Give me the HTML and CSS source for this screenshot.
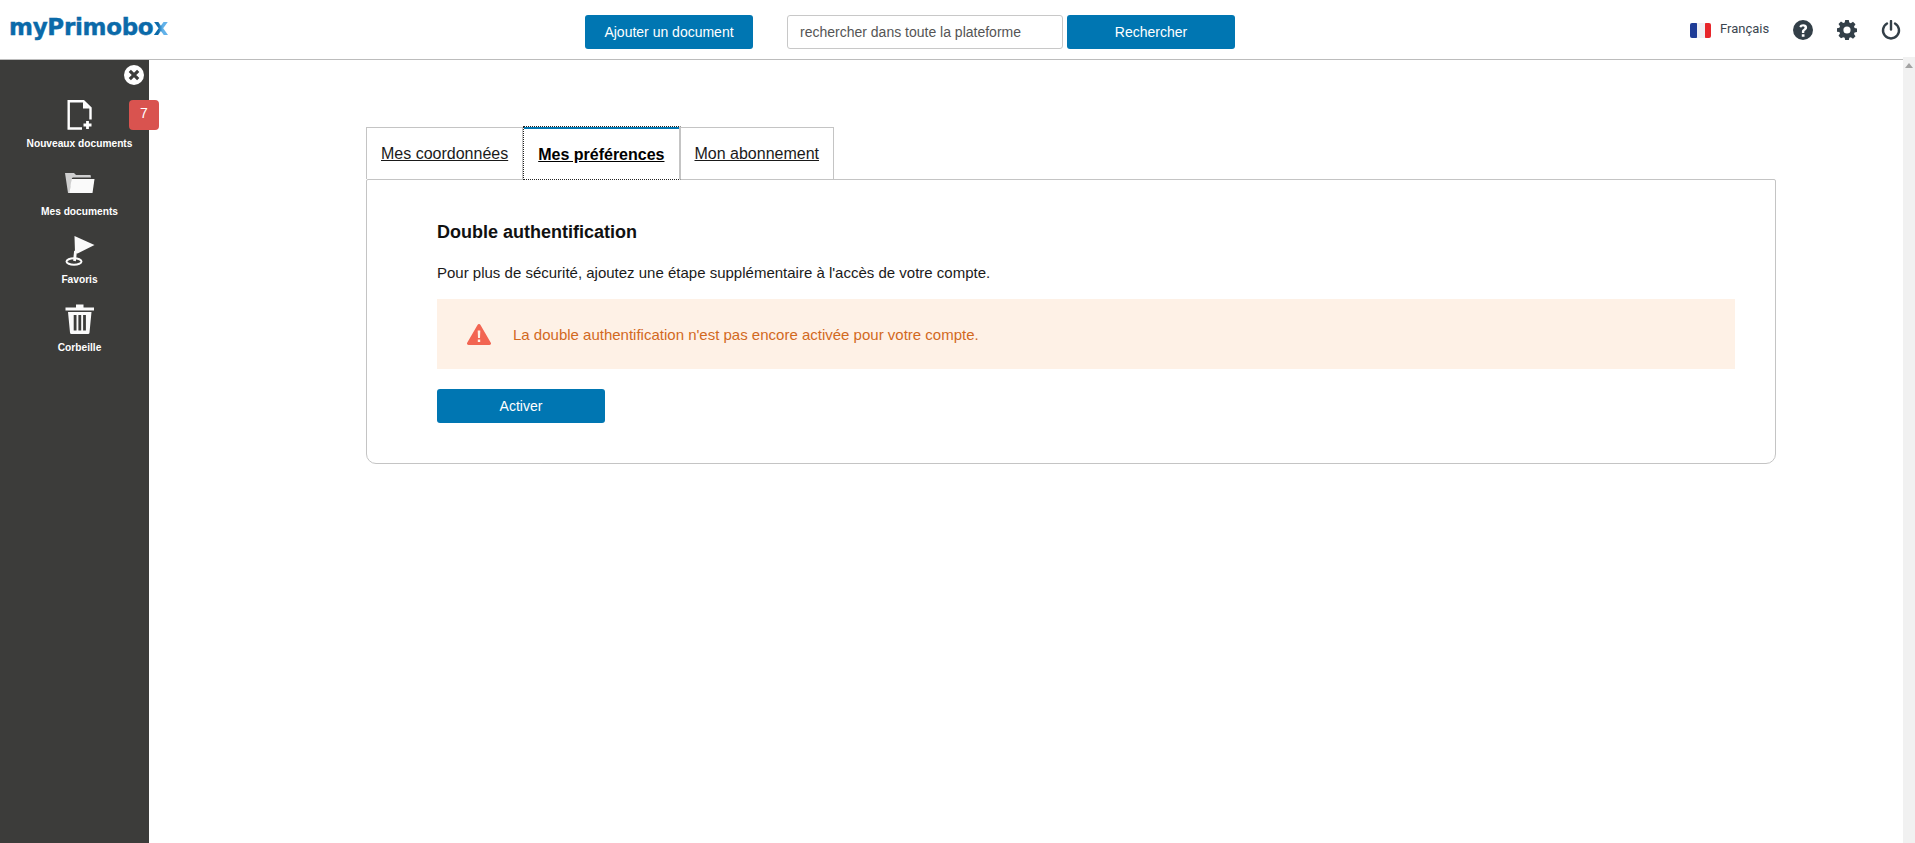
FILE: index.html
```html
<!DOCTYPE html>
<html lang="fr">
<head>
<meta charset="utf-8">
<title>myPrimobox - Mes préférences</title>
<link rel="stylesheet" href="styles.css">
</head>
<body>

<header class="topbar">
  <a class="logo" href="#">myPrimobo<span class="logoX">x</span></a>

  <div class="topActions">
    <button class="btn btnAdd" type="button">Ajouter un document</button>
    <input class="searchInput" type="text" value="rechercher dans toute la plateforme">
    <button class="btn btnSearch" type="button">Rechercher</button>
  </div>

  <div class="topRight">
    <svg class="flag" viewBox="0 0 21 15" aria-hidden="true">
      <rect x="0" y="0" width="8" height="15" rx="2" fill="#1f3c96"/>
      <rect x="14" y="0" width="7" height="15" rx="2" fill="#e7262b"/>
      <rect x="7" y="0" width="8" height="15" fill="#f0f0f4"/>
    </svg>
    <span class="lang">Français</span>
    <svg class="topIcon helpIcon" viewBox="0 0 20 20" aria-hidden="true">
      <path fill-rule="evenodd" d="M10 0a10 10 0 1 0 0 20a10 10 0 0 0 0-20zM8.900 13.100v-1.600c0-1.300.7-1.900 1.600-2.500c.7-.5 1.100-.8 1.100-1.400c0-.7-.6-1.100-1.500-1.100c-.9 0-1.600.5-2 1.200L6.300 6.500C7 5.200 8.300 4.300 10.200 4.300c2.300 0 3.900 1.200 3.900 3.200c0 1.500-.8 2.200-1.800 2.900c-.8.5-1 .8-1 1.500v1.200zM8.800 14.200h2.700v2.500H8.800z"/>
    </svg>
    <svg class="topIcon gearIcon" viewBox="0 0 20 20" aria-hidden="true">
      <path fill-rule="evenodd" d="M8.200 0h3.600l.5 2.600l1.500.6l2.200-1.500l2.500 2.500l-1.500 2.200l.6 1.500l2.400.5v3.600l-2.400.5l-.6 1.500l1.500 2.200l-2.500 2.500l-2.200-1.500l-1.500.6l-.5 2.500H8.200l-.5-2.500l-1.500-.6L4 18.200l-2.500-2.500L3 13.500l-.6-1.500L0 11.800V8.200l2.400-.5L3 6.200L1.500 4L4 1.500l2.200 1.500l1.500-.6zM10 6.400a3.600 3.600 0 1 0 0 7.200a3.600 3.600 0 0 0 0-7.200z"/>
    </svg>
    <svg class="topIcon powerIcon" viewBox="0 0 20 20" aria-hidden="true">
      <path d="M6 3.500a8 8 0 1 0 8 0" fill="none" stroke="#333f48" stroke-width="2.400" stroke-linecap="round"/>
      <path d="M10 1v8.500" fill="none" stroke="#333f48" stroke-width="2.400" stroke-linecap="round"/>
    </svg>
  </div>
</header>

<div class="layout">
  <nav class="sidebar">
    <div class="closeRow">
      <svg class="closeIcon" viewBox="0 0 20 20" aria-hidden="true">
        <circle cx="10" cy="10" r="10" fill="#fff"/>
        <path d="M5.800 5.800l8.400 8.400M14.200 5.800l-8.400 8.400" stroke="#3c3c3a" stroke-width="3.200"/>
      </svg>
    </div>

    <a class="navItem" href="#">
      <span class="badge">7</span>
      <svg class="navIcon" viewBox="0 0 30 30" aria-hidden="true">
        <path d="M17 28.500H3.700V1.200H18.500L25.500 8V19.500" fill="none" stroke="#fff" stroke-width="2.400"/>
        <path d="M18 1.500v7h7z" fill="#fff"/>
        <path d="M22.500 21v8M18.500 25h8" stroke="#fff" stroke-width="2.800"/>
      </svg>
      Nouveaux documents
    </a>
    <a class="navItem" href="#">
      <svg class="navIcon" viewBox="0 0 30 30" aria-hidden="true">
        <path d="M0 5h9l2 2h14.500l.5 2.500H8l-1 .5L5 25H3z" fill="#cfcfcf"/>
        <path d="M6.500 11h23l-2 14H4.500z" fill="#fafafa"/>
      </svg>
      Mes documents
    </a>
    <a class="navItem" href="#">
      <svg class="navIcon" viewBox="0 0 30 30" aria-hidden="true">
        <path d="M9.500 0l20 9l-17 8.500l-2.500-.5z" fill="#fafafa"/>
        <path d="M10.500 15l-1 10" stroke="#fafafa" stroke-width="2.800"/>
        <ellipse cx="9" cy="25.500" rx="7.500" ry="3.200" fill="none" stroke="#fafafa" stroke-width="2"/>
      </svg>
      Favoris
    </a>
    <a class="navItem" href="#">
      <svg class="navIcon" viewBox="0 0 30 30" aria-hidden="true">
        <path d="M.5 3.500h28.500v3H.5zM11 .5h7.500v3H11z" fill="#fafafa"/>
        <path fill-rule="evenodd" d="M3 8h23.500l-2 20.500a1.500 1.500 0 0 1-1.500 1.500H6.500A1.500 1.500 0 0 1 5 28.500zM8.700 11v15.500h2.800V11zM13.400 11v15.500h2.800V11zM18.100 11v15.500h2.800V11z" fill="#fafafa"/>
      </svg>
      Corbeille
    </a>
  </nav>

  <main class="content">
    <ul class="tabs">
      <li class="tab"><a href="#">Mes coordonnées</a></li>
      <li class="tab tabActive"><a href="#">Mes préférences</a></li>
      <li class="tab tabLast"><a href="#">Mon abonnement</a></li>
    </ul>

    <section class="panel">
      <h2 class="panelTitle">Double authentification</h2>
      <p class="panelText">Pour plus de sécurité, ajoutez une étape supplémentaire à l'accès de votre compte.</p>

      <div class="alert">
        <svg class="alertIcon" viewBox="0 0 24 21" aria-hidden="true">
          <path fill-rule="evenodd" d="M12 0c.7 0 1.200.4 1.500 1l10.300 17.800c.6 1.100-.1 2.200-1.300 2.200H1.500C.3 21-.4 19.900.2 18.800L10.500 1c.3-.6.8-1 1.500-1zM10.700 6.500l.3 7.500h2l.3-7.500zM10.800 15.500v2.500h2.400v-2.500z" fill="#f26552"/>
        </svg>
        <span>La double authentification n'est pas encore activée pour votre compte.</span>
      </div>

      <button class="btn btnActivate" type="button">Activer</button>
    </section>
  </main>
</div>

<div class="scrollStrip"><span class="scrollArrow"></span></div>

</body>
</html>
```

FILE: styles.css
```css
* {
  box-sizing: border-box;
}

html, body {
  height: 100%;
}

body {
  margin: 0;
  background-color: #fff;
  font-family: "Liberation Sans", Arial, sans-serif;
  font-size: 15px;
  color: #1a1a1a;
  overflow: hidden;
}

/* top bar */
.topbar {
  display: flex;
  align-items: flex-start;
  height: 60px;
  border-bottom: 1px solid #bcbcbc;
  position: relative;
}

.logo {
  width: 585px;
  padding: 14px 0 0 9px;
  font-family: "DejaVu Sans", sans-serif;
  font-size: 23px;
  font-weight: bold;
  letter-spacing: -0.3px;
  color: #0b6aa9;
  -webkit-text-stroke: 0.4px #0b6aa9;
  text-decoration: none;
}

.logoX {
  background-image: linear-gradient(to right, #0b6aa9 35%, #62b2ea 65%);
  -webkit-background-clip: text;
  background-clip: text;
  color: transparent;
  -webkit-text-stroke: 0;
}

.topActions {
  display: flex;
  padding-top: 15px;
}

.btn {
  height: 34px;
  border: 0;
  border-radius: 3px;
  background-color: #0076b2;
  color: #fff;
  font-family: "Liberation Sans", Arial, sans-serif;
  font-size: 14px;
}

.btnAdd,
.btnSearch {
  width: 168px;
}

.searchInput {
  width: 276px;
  height: 34px;
  margin: 0 4px 0 34px;
  padding: 0 12px;
  border: 1px solid #c8c8c8;
  border-radius: 3px;
  font-family: "Liberation Sans", Arial, sans-serif;
  font-size: 14px;
  color: #555;
}

.topRight {
  display: flex;
  align-items: center;
  margin-left: 455px;
  padding-top: 20px;
}

.flag {
  width: 21px;
  height: 15px;
}

.lang {
  width: 49px;
  margin: -4px 0 0 9px;
  font-family: Roboto, sans-serif;
  font-size: 13px;
  color: #3b4650;
}

.topIcon {
  width: 20px;
  height: 20px;
  fill: #333f48;
}

.helpIcon,
.gearIcon,
.powerIcon {
  margin-left: 24px;
}

/* left menu + page */
.layout {
  display: flex;
  height: 783px;
}

.sidebar {
  flex: 0 0 149px;
  background-color: #3c3c3a;
  padding: 5px 0 0 10px;
}

.closeRow {
  display: flex;
  justify-content: flex-end;
  padding-right: 5px;
  height: 35px;
}

.closeIcon {
  width: 20px;
  height: 20px;
}

.navItem {
  position: relative;
  display: flex;
  flex-direction: column;
  align-items: center;
  height: 68px;
  color: #fff;
  font-size: 10.2px;
  font-weight: bold;
  text-decoration: none;
}

.navIcon {
  width: 30px;
  height: 30px;
  margin-bottom: 8px;
}

.badge {
  position: absolute;
  left: 119px;
  top: 0;
  width: 30px;
  height: 30px;
  padding-top: 5px;
  border-radius: 4px;
  background-color: #d9534f;
  font-weight: normal;
  font-size: 14px;
  text-align: center;
}

.content {
  flex: 1;
  padding: 67px 0 0 217px;
}

/* tabs */
.tabs {
  display: flex;
  align-items: flex-start;
  height: 52px;
  list-style-type: none;
  margin: 0;
  padding: 0;
}

.tab {
  height: 52px;
  padding: 17px 14px 0;
  border: 1px solid #c4c4c4;
  border-bottom: 0;
  font-size: 16px;
}

.tab a {
  color: #1a1a1a;
}

.tabActive {
  position: relative;
  z-index: 1;
  height: 54px;
  margin-top: -1px;
  padding: 19px 15px 0 14px;
  border: 1px dotted #222;
  border-right: 2px solid #c4c4c4;
  box-shadow: inset 0 2px 0 #0076b2;
  font-weight: bold;
  background-color: #fff;
}

.tabActive a {
  color: #000;
}

.tabLast {
  margin-left: -2px;
}

.panel {
  width: 1410px;
  height: 285px;
  padding: 41px 40px 0 70px;
  border: 1px solid #c4c4c4;
  border-radius: 2px 2px 10px 10px;
}

.panelTitle {
  margin: 0;
  font-size: 18px;
  line-height: 22px;
  color: #111;
}

.panelText {
  margin: 20px 0 0;
  line-height: 20px;
}

.alert {
  display: flex;
  align-items: center;
  height: 70px;
  margin-top: 16px;
  padding-left: 30px;
  background-color: #fef1e6;
  color: #d2691e;
}

.alertIcon {
  width: 24px;
  height: 21px;
  margin-right: 22px;
}

.btnActivate {
  display: block;
  width: 168px;
  margin-top: 20px;
}

/* scrollbar strip */
.scrollStrip {
  position: absolute;
  top: 57px;
  right: 0;
  bottom: 0;
  width: 12px;
  background-color: #f1f1f1;
}

.scrollArrow {
  display: block;
  width: 0;
  margin: 6px auto 0;
  border-left: 4px solid transparent;
  border-right: 4px solid transparent;
  border-bottom: 5px solid #a3a3a3;
}
```
